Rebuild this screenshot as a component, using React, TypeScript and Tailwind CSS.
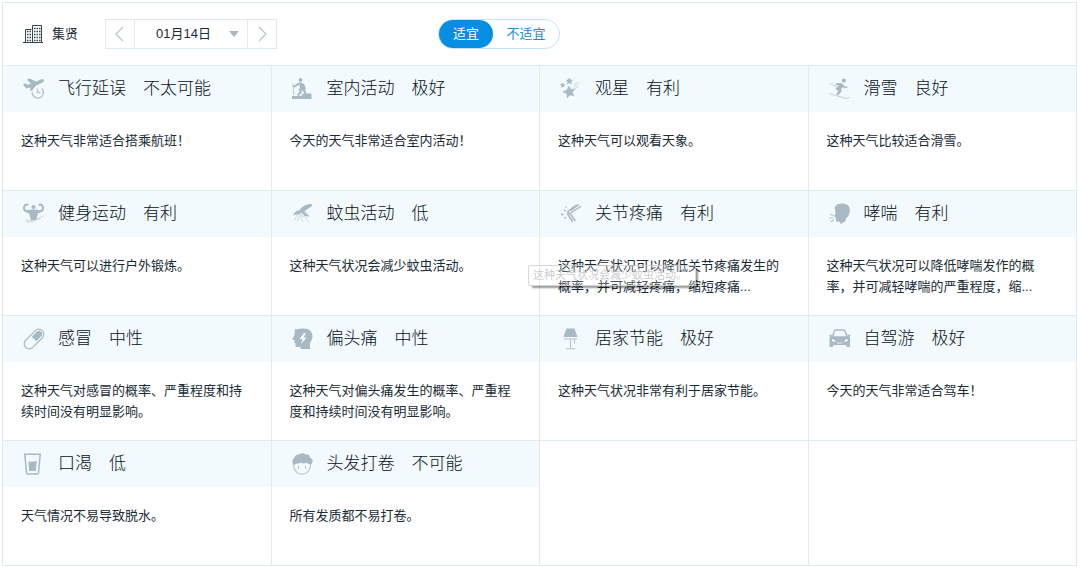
import { useState } from "react";
import type { ReactNode } from "react";

type LifeIndex = {
  name: string;
  level: string;
  text: string;
  icon: ReactNode;
  tip?: string;
};

const icons = {
  plane: (
    <>
      <path
        fill="currentColor"
        d="M0 6.2 2 5.2l2.500 1.600L8 5.800 3.800 1.800 6.500.6l7 3 4-2c1.600-.7 3.300-.6 3.500.400.3 1.200-1 2.300-2.600 3L12.500 8l-3 4.300-2.500.7.3-3.600-4.300 1.200z"
      />
      <path
        d="M9.3 13.8a5.600 5.600 0 1 0 9.400-3.400M14.500 10.500v4h3"
        stroke="currentColor"
        strokeWidth="1.400"
        opacity=".8"
      />
    </>
  ),
  steps: (
    <>
      <circle cx="8.5" cy="2" r="1.9" fill="currentColor" />
      <path d="M.8 5.5 2 17" stroke="currentColor" strokeWidth="1.1" opacity=".7" />
      <path d="M7.5 5.5 1.5 8.8M7.8 5.5c3 0 4.5 2 4.8 5.5l-4.8.7 1 2.5-3.2 3.3" stroke="currentColor" strokeWidth="2" />
      <path d="M7 4.5c4 0 6.5 3 6.5 7l-5 1z" fill="currentColor" />
      <path d="m11.5 11.5 2.3 4.5" stroke="currentColor" strokeWidth="2" />
      <path d="M0 18h9l2-2.5h8.5V21H0z" fill="currentColor" />
    </>
  ),
  stars: (
    <>
      <path
        fill="currentColor"
        stroke="currentColor"
        strokeWidth=".7"
        strokeLinejoin="round"
        d="m8.8 8 2.1 3.4 4-.4-2.6 3.1 1.6 3.8-3.8-1.1-3 2.9-.2-4.1L3 13.8l3.9-1.5zM9.3 0l1 2 2.2.2-1.6 1.5.5 2.2-2-1.1-2 1.1.4-2.2-1.6-1.5L8.4 2zM2.6 5l.7 1.3 1.5.2-1.1 1.1.3 1.5-1.4-.7-1.4.7.3-1.5L.4 6.5l1.5-.2z"
      />
      <path d="m13.5 9.5 6.5-5.3M14 7l3-2.8M15 11l3.5-3" stroke="currentColor" strokeWidth=".8" opacity=".7" />
    </>
  ),
  ski: (
    <>
      <circle cx="14.8" cy="2.6" r="2.1" fill="currentColor" />
      <path d="M7 5.2 12.5 5l2.8 3-3.3 3 .7 2-3.5 4.5-2-1.2 2.2-3.3-3-2L10 7.5 6.5 7z" fill="currentColor" />
      <path d="m14 7 1.3 2.5 3-.5" stroke="currentColor" strokeWidth="1.3" />
      <path d="m1 5.5 8 4" stroke="currentColor" strokeWidth=".9" opacity=".7" />
      <path d="m0 15.5 16.5 4.8c1.600.4 3 .2 4-1.300" stroke="currentColor" strokeWidth="1" opacity=".7" />
    </>
  ),
  muscle: (
    <>
      <circle cx="10.5" cy="4" r="2" fill="currentColor" />
      <path d="M5.2 2.2C3.5.8 1.5 2 1 4.500c-.4 2.300 1.200 3.800 3.500 4M15.800 2.200c1.700-1.400 3.700-.2 4.200 2.300.4 2.300-1.200 3.800-3.500 4" stroke="currentColor" strokeWidth="2" />
      <path d="M2.500 7.500 8 6.500h5l5.500 1c-.3 1.700-2 2.500-3.300 2.700L13 17H8L6 10.200c-1.500-.2-3.200-1-3.500-2.700z" fill="currentColor" />
      <path d="M2 16.500c4 2 10.500 1 18.500-3.500M3 19.300c4-.2 10-1.300 14-4.300" stroke="currentColor" strokeWidth=".9" opacity=".6" />
    </>
  ),
  mosquito: (
    <>
      <path d="M6.500 8C10 3.500 14 1 19 1c1.500.2 1.500 2 0 2.800L11 9z" fill="currentColor" />
      <path d="M0 13c2-.5 2-4 5.500-5.200 2.500-.6 4.500 0 5.500 1.200l-4.500 2.500c-1.500 0-2.700-.5-6.500 1.500z" fill="currentColor" />
      <path d="m9 8 4 4.500 3-.5M11.500 8.500l5 5" stroke="currentColor" strokeWidth="1.600" />
      <path d="m6 10.500-3.500 6.500M8 11l-3 7.500M10 11.500l-1.500 4 3 3M13 12l1 4 3 3M8 11.500l4 3" stroke="currentColor" strokeWidth=".7" opacity=".7" />
    </>
  ),
  joint: (
    <>
      <path d="M20.500 3.500 11.500 9.500M18 2l-7 5.500M8 11.500l4.500 7M10.500 11l4.500 6.500" stroke="currentColor" strokeWidth="1.500" strokeLinecap="round" />
      <path d="M18 2c-2.500.500-5.500 2.500-7.500 4.500-1 1-2.700 1-2.800 2.300.200 1.200 1.500 1.400 2.800 1M7 11.500c.8-1.200 2.800-1.500 3.500-.5" stroke="currentColor" strokeWidth="1.300" />
      <path d="M1 11.500h2.500M4 7l1.700 1.200M4.500 15.500 6 14" stroke="currentColor" strokeWidth="1.500" />
      <circle cx="6" cy="4" r=".8" fill="currentColor" />
    </>
  ),
  cough: (
    <>
      <path
        fill="currentColor"
        d="M6.300 3.300C8 .8 11 .3 14 .5c4.500.3 7 3 6.800 7-.2 3.500-1.500 6-3.800 8l-.5 2.500-4.700 3-1.500-2.500-2.500.3c-1-.3-.8-1.500-.8-2.500l-.5-.8.5-1-1.800-1.300c.8-1.700 1.500-2.700 1.300-4.700-.8-1.500-.9-3.800-.2-5.200z"
      />
      <path d="m1 11 3.500 1.800M0 15h4.200M1.500 19l3.500-2.200" stroke="currentColor" strokeWidth="1.200" opacity=".8" />
    </>
  ),
  pill: (
    <g transform="rotate(45 11 11)">
      <rect x="6" y="-.8" width="10" height="23.6" rx="5" stroke="currentColor" strokeWidth="1.200" />
      <path d="M7.800 11V4a3.200 3.200 0 0 1 6.400 0v7z" fill="currentColor" />
    </g>
  ),
  migraine: (
    <>
      <path
        fill="currentColor"
        d="M3 1C6 1.500 8 .5 12 .5c5.500 0 8.500 3.300 8.500 7.800 0 3.200-1.700 4.700-2.500 7V21H9l-1-2.300-3.500.3c-1.200-.3-1-2-1-3.500L2 14l.8-1.500L.2 11.300C1 9.500 2.500 8 2.500 6z"
      />
      <path d="M12 5 7.500 10.800l3 .4L9 16l5.500-6.300-3-.4 2.500-4z" fill="#f3fafe" />
    </>
  ),
  lamp: (
    <>
      <path d="M6.500 0.500h8l3 8.500h-14z" fill="currentColor" />
      <path d="M4 10.800h13M10.500 10.800v9.700M6 20.700h9M14.500 11v4.500" stroke="currentColor" strokeWidth="1.200" opacity=".75" />
    </>
  ),
  car: (
    <>
      <path d="M3.300 9 5 4C5.300 2.800 6 2 7 2h7.500c1 0 1.700.8 2 2l1.700 5" stroke="currentColor" strokeWidth="1.500" />
      <path
        fill="currentColor"
        fillRule="evenodd"
        d="M.3 6.700h2.500v1.600h16V6.700h2.500v1.600h-1c.5.700.8 1.500.8 2.500V19h-3.700v-2H4.200v2H.5v-8.200c0-1 .3-1.800.8-2.500h-1zM3 11v2.200l3.500.8c0-1.600-1.500-2.700-3.500-3zm15.600 0c-2 .3-3.500 1.400-3.500 3l3.500-.8z"
      />
      <path d="M8 15h5.500" stroke="#f3fafe" strokeWidth=".8" />
    </>
  ),
  glass: (
    <>
      <path d="M1.800 1.200h15.400l-1.700 18.700c-.1.700-.4 1-1 1h-10c-.6 0-.9-.3-1-1z" stroke="currentColor" strokeWidth="1.500" />
      <path d="M5.300 8.200c2.500 1.200 5 .3 8.400-.5l-.8 10.300H6.200z" fill="currentColor" />
    </>
  ),
  hair: (
    <>
      <path
        fill="currentColor"
        d="M1 11.500C.2 9 .2 6 2.200 5 2.500 2.500 5 1.200 7 1.200 9-.3 12 0 13.300 1.500c3-.7 4.500 1.200 4.800 3.200 2.200.5 3.200 2.800 2.200 4.300.2 1.400-.8 2.200-2 2.500-2-.5-3-1-3.800-1.700-1.800.9-4 .8-5.300 0-1.400 1-3.300.7-4.500.7-1 1-1.700 1.500-3.700 1z"
      />
      <path d="M1.500 10.500c-.5 6 3.500 10.700 8.500 10.700s9-4.700 8.500-10.700" stroke="currentColor" strokeWidth="1.200" opacity=".7" />
      <path d="M6.500 13v2.500M13.500 13v2.500" stroke="currentColor" strokeWidth="1" />
    </>
  ),
};

const indexes: LifeIndex[] = [
  { name: "飞行延误", level: "不太可能", text: "这种天气非常适合搭乘航班！", icon: icons.plane },
  { name: "室内活动", level: "极好", text: "今天的天气非常适合室内活动！", icon: icons.steps },
  { name: "观星", level: "有利", text: "这种天气可以观看天象。", icon: icons.stars },
  { name: "滑雪", level: "良好", text: "这种天气比较适合滑雪。", icon: icons.ski },
  { name: "健身运动", level: "有利", text: "这种天气可以进行户外锻炼。", icon: icons.muscle },
  {
    name: "蚊虫活动",
    level: "低",
    text: "这种天气状况会减少蚊虫活动。",
    icon: icons.mosquito,
    tip: "这种天气状况会减少蚊虫活动。",
  },
  { name: "关节疼痛", level: "有利", text: "这种天气状况可以降低关节疼痛发生的概率，并可减轻疼痛，缩短疼痛...", icon: icons.joint },
  { name: "哮喘", level: "有利", text: "这种天气状况可以降低哮喘发作的概率，并可减轻哮喘的严重程度，缩...", icon: icons.cough },
  { name: "感冒", level: "中性", text: "这种天气对感冒的概率、严重程度和持续时间没有明显影响。", icon: icons.pill },
  { name: "偏头痛", level: "中性", text: "这种天气对偏头痛发生的概率、严重程度和持续时间没有明显影响。", icon: icons.migraine },
  { name: "居家节能", level: "极好", text: "这种天气状况非常有利于居家节能。", icon: icons.lamp },
  { name: "自驾游", level: "极好", text: "今天的天气非常适合驾车！", icon: icons.car },
  { name: "口渴", level: "低", text: "天气情况不易导致脱水。", icon: icons.glass },
  { name: "头发打卷", level: "不可能", text: "所有发质都不易打卷。", icon: icons.hair },
];

function BuildingIcon() {
  return (
    <svg className="w-5 h-5 shrink-0" viewBox="0 0 20 20" fill="none" stroke="#33444f" aria-hidden="true">
      <path d="M0 18.500h20" />
      <path d="M2.500 18V5.500h6M9.500 18V1.500h9V18" />
      <path d="M4 7.500h4M4 10.500h4M4 13.500h4M4 16.500h4" strokeWidth="1.500" strokeDasharray="1.500 1" />
      <path d="M11 4.500h6.500M11 7.500h6.500M11 10.500h6.500M11 13.500h6.500M11 16.500h6.500" strokeWidth="1.500" strokeDasharray="1.500 1" />
    </svg>
  );
}

function Chevron({ d }: { d: string }) {
  return (
    <svg className="w-4 h-4" viewBox="0 0 16 16" fill="none" stroke="#b5c4cf" strokeWidth="1.200" aria-hidden="true">
      <path d={d} />
    </svg>
  );
}

function Cell({ item }: { item: LifeIndex }) {
  return (
    <section className="relative min-h-[125px] border-r border-b border-[#dfebf3]">
      <h2 className="h-[46px] pl-5 flex items-center bg-[#f3fafe] text-[17px] font-light text-[#04121a]">
        <svg className="w-[22px] h-[22px] mr-[13px] shrink-0 text-[#a9b9c4]" viewBox="0 0 22 22" fill="none" aria-hidden="true">
          {item.icon}
        </svg>
        <span className="mr-[17px]">{item.name}</span>
        <span>{item.level}</span>
      </h2>
      <p className="px-[18px] pt-[18px] text-[13px] leading-[21px]">{item.text}</p>
      {item.tip && (
        <div
          role="tooltip"
          className="absolute z-10 left-full top-[74px] -ml-[11px] h-[21px] px-1 w-[168px] border border-[#cccccc]/80 rounded-xs bg-white/20 text-[11px] leading-[19px] text-[#bdbdbd]/80 whitespace-nowrap shadow-[3px_3px_2px_-1px_rgba(0,0,0,0.4)]"
        >
          {item.tip}
        </div>
      )}
    </section>
  );
}

export default function App() {
  const [day, setDay] = useState(14);
  const [suitable, setSuitable] = useState(true);
  const empty = (4 - (indexes.length % 4)) % 4;

  const tab = (active: boolean) =>
    active
      ? "h-full w-[54px] rounded-full bg-[#058ee2] text-white"
      : "h-full w-[66px] rounded-full text-[#168dcf]";

  return (
    <div className="mt-[2px] ml-[2px] mr-[3px] border-t border-l border-[#dfebf3] bg-white text-[#182b36] font-['Liberation_Sans','Noto_Sans_CJK_SC',sans-serif]">
      {/* Toolbar */}
      <header className="h-[63px] flex items-center pl-5 border-b border-r border-[#dfebf3] text-[13px]">
        <BuildingIcon />
        <span className="ml-[9px] mr-[27px]">集贤</span>
        <div className="h-[30px] flex border border-[#dfebf3]">
          <button
            className="w-7 flex items-center justify-center"
            aria-label="前一天"
            onClick={() => setDay((d) => Math.max(13, d - 1))}
          >
            <Chevron d="M11 1 4 8l7 7" />
          </button>
          <div className="relative w-[114px] border-x border-[#dfebf3]">
            <select
              aria-label="日期"
              className="appearance-none w-full h-full pl-[21px] bg-transparent outline-none"
              value={day}
              onChange={(e) => setDay(Number(e.target.value))}
            >
              {[13, 14, 15].map((d) => (
                <option key={d} value={d}>
                  01月{d}日
                </option>
              ))}
            </select>
            <svg className="absolute right-2 top-[11px] w-2.5 h-1.5 pointer-events-none" viewBox="0 0 10 6" aria-hidden="true">
              <path d="M0 0h10L5 6z" fill="#a9b9c4" />
            </svg>
          </div>
          <button
            className="w-7 flex items-center justify-center"
            aria-label="后一天"
            onClick={() => setDay((d) => Math.min(15, d + 1))}
          >
            <Chevron d="m5 1 7 7-7 7" />
          </button>
        </div>
        <div className="ml-[161px] h-[30px] flex border border-[#bfe5fc] rounded-full">
          <button className={tab(suitable)} aria-pressed={suitable} onClick={() => setSuitable(true)}>
            适宜
          </button>
          <button className={tab(!suitable)} aria-pressed={!suitable} onClick={() => setSuitable(false)}>
            不适宜
          </button>
        </div>
      </header>

      <main className="grid grid-cols-4">
        {indexes.map((item) => (
          <Cell key={item.name} item={item} />
        ))}
        {[...Array(empty)].map((_, i) => (
          <div key={i} className="border-r border-b border-[#dfebf3]" />
        ))}
      </main>
    </div>
  );
}
